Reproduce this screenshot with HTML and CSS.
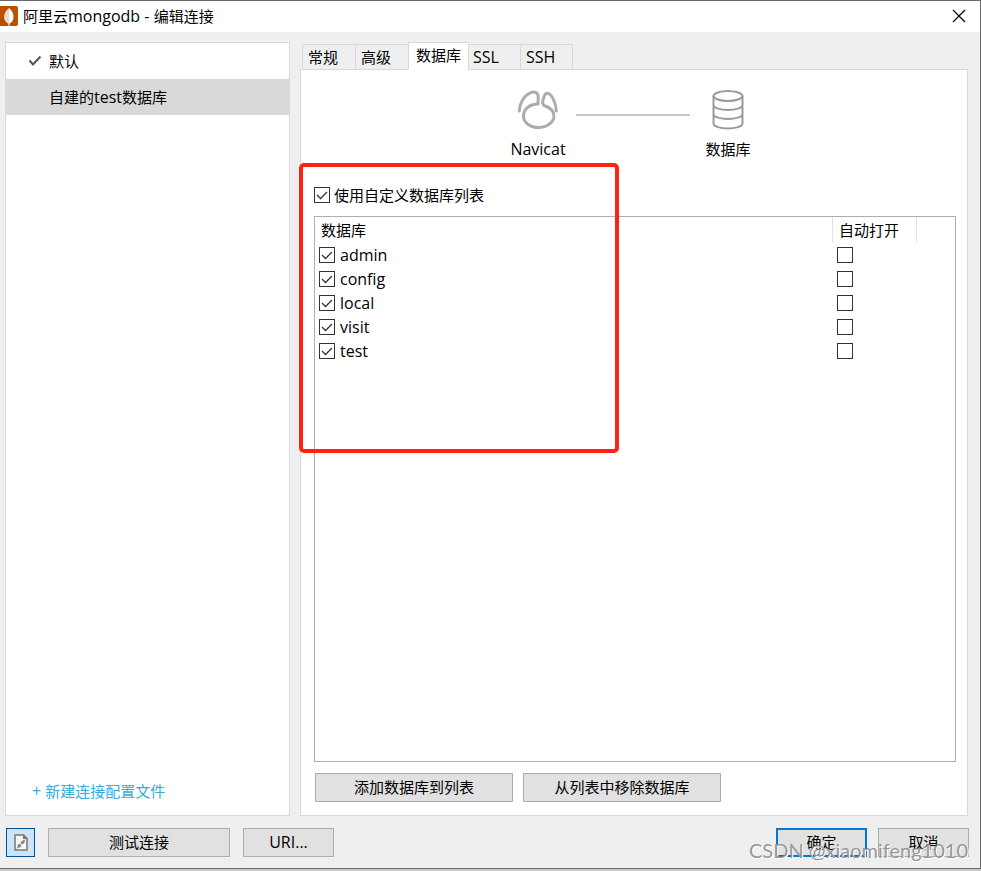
FILE: index.html
```html
<!DOCTYPE html>
<html lang="zh-CN">
<head>
<meta charset="utf-8">
<title>阿里云mongodb - 编辑连接</title>
<link rel="stylesheet" href="styles.css">
</head>
<body>
<div class="window">
  <header class="titlebar">
    <svg class="app-icon" width="18" height="20" viewBox="0 0 18 20" aria-hidden="true">
      <path d="M0 0H16Q18 0 18 2V18Q18 20 16 20H0Z" fill="#b95200"/>
      <path d="M9 2C5.500 5 4 8 4 11C4 14 6 16.500 8 17.500L8.500 20H9Z" fill="#f0d8c8"/>
      <path d="M9 2C12.500 5 13.500 8 13.500 11C13.500 14 12 16.500 9.500 17.500V20H9Z" fill="#fff"/>
    </svg>
    <h1 class="title">阿里云<span class="latin">mongodb - </span>编辑连接</h1>
    <button class="close" type="button" aria-label="关闭">
      <svg width="14" height="14" viewBox="0 0 14 14"><path d="M1 1L13 13M13 1L1 13" stroke="#000" stroke-width="1.200" fill="none"/></svg>
    </button>
  </header>

  <main class="content">
    <nav class="profiles">
      <button class="profile" type="button">
        <svg class="tick" width="14" height="12" viewBox="0 0 14 12"><path d="M1.500 5.500L5 9.500L12.500 1.500" fill="none" stroke="#555" stroke-width="2"/></svg>
        <span>默认</span>
      </button>
      <button class="profile selected" type="button"><span>自建的<span class="latin">test</span>数据库</span></button>
      <a class="new-profile" href="#"><span class="latin">+ </span>新建连接配置文件</a>
    </nav>

    <section class="editor">
      <div class="tabs" role="tablist">
        <button class="tab" type="button" role="tab">常规</button>
        <button class="tab" type="button" role="tab">高级</button>
        <button class="tab active" type="button" role="tab" aria-selected="true">数据库</button>
        <button class="tab short latin" type="button" role="tab">SSL</button>
        <button class="tab latin" type="button" role="tab">SSH</button>
      </div>
      <div class="panel">
        <div class="route">
          <div class="node">
            <svg width="42" height="42" viewBox="0 0 42 42" fill="none" stroke="#acacac" stroke-width="3" stroke-linecap="round" stroke-linejoin="round">
              <path d="M2.300 22C3 12 9 3.800 16.500 3C20 3 21.500 5.500 21.200 9L21 15C14 15 6.500 19 6.500 27C6.500 33.500 13 38.500 21.500 38.500C30 38.500 37 33 37 27C37 22 33 18.500 27 16.500L25.500 14C26 9 28 4.500 30 4.300C34 4 39 13 39.300 22"/>
            </svg>
            <span class="latin">Navicat</span>
          </div>
          <div class="wire"></div>
          <div class="node">
            <svg width="42" height="42" viewBox="0 0 42 42" fill="none" stroke="#999" stroke-width="2">
              <ellipse cx="21" cy="7" rx="14.500" ry="5"/>
              <path d="M6.500 7V34.500C6.500 41 35.500 41 35.500 34.500V7M6.500 16C6.500 22.500 35.500 22.500 35.500 16M6.500 25C6.500 31.500 35.500 31.500 35.500 25"/>
            </svg>
            <span>数据库</span>
          </div>
        </div>

        <label class="check custom-list"><input type="checkbox" checked>使用自定义数据库列表</label>

        <div class="list">
          <table>
            <thead>
              <tr><th class="name-col">数据库</th><th class="open-col">自动打开</th><th class="rest-col"></th></tr>
            </thead>
            <tbody>
              <tr><td><label class="check latin"><input type="checkbox" checked>admin</label></td><td><input type="checkbox" aria-label="自动打开 admin"></td><td></td></tr>
              <tr><td><label class="check latin"><input type="checkbox" checked>config</label></td><td><input type="checkbox" aria-label="自动打开 config"></td><td></td></tr>
              <tr><td><label class="check latin"><input type="checkbox" checked>local</label></td><td><input type="checkbox" aria-label="自动打开 local"></td><td></td></tr>
              <tr><td><label class="check latin"><input type="checkbox" checked>visit</label></td><td><input type="checkbox" aria-label="自动打开 visit"></td><td></td></tr>
              <tr><td><label class="check latin"><input type="checkbox" checked>test</label></td><td><input type="checkbox" aria-label="自动打开 test"></td><td></td></tr>
            </tbody>
          </table>
        </div>

        <div class="list-actions">
          <button class="btn wide" type="button">添加数据库到列表</button>
          <button class="btn wide" type="button">从列表中移除数据库</button>
        </div>
        <div class="highlight"></div>
      </div>
    </section>
  </main>

  <footer class="footer">
    <button class="btn toggle" type="button" aria-label="连接配置文件">
      <svg width="14" height="18" viewBox="0 0 14 18">
        <path d="M1 1H9.500L13 4.500V16H1Z" fill="#f7f7f7" stroke="#777" stroke-width="1.500"/>
        <path d="M9 1V5H13Z" fill="#777"/>
        <path d="M3 14.500L11 5.500" stroke="#999" stroke-width="1"/>
        <path d="M3.500 11L5 9.500L7.500 12L6 13.500L3.500 14Z" fill="#888"/>
        <path d="M6.500 8.500L8.500 6.500L11 6L10.500 8.500L8.500 10.500Z" fill="#888"/>
      </svg>
    </button>
    <button class="btn test" type="button">测试连接</button>
    <button class="btn latin" type="button">URI...</button>
    <span class="spacer"></span>
    <button class="btn primary" type="button">确定</button>
    <button class="btn" type="button">取消</button>
    <span class="watermark">CSDN @xiaomifeng1010</span>
  </footer>
</div>
</body>
</html>
```

FILE: styles.css
```css
* { box-sizing: border-box; }

body {
  margin: 0;
  background: #c9c9c9;
  color: #000;
  font: 15px/20px "Open Sans", "Noto Sans CJK SC", sans-serif;
}

button {
  font: inherit;
  color: inherit;
}

.latin { font-size: 16px; }

.window {
  display: flex;
  flex-direction: column;
  min-height: calc(100vh - 2px);
  margin-bottom: 2px;
  background: #efefef;
  border: solid #6b696b;
  border-width: 1px 1px 1px 0;
}

.titlebar {
  display: flex;
  align-items: center;
  gap: 5px;
  height: 31px;
  padding: 0 14px 2px 0;
  background: #fff;
}

.title {
  flex: 1;
  margin: 0;
  font-size: 15px;
  font-weight: 400;
  white-space: pre;
}

.close {
  display: flex;
  padding: 0;
  border: 0;
  background: none;
}

.content {
  flex: 1;
  display: flex;
  gap: 10px;
  padding: 10px 12px 0 5px;
}

.profiles {
  display: flex;
  flex-direction: column;
  flex: 0 0 285px;
  background: #fff;
  border: 1px solid #d9d9d9;
}

.profile {
  position: relative;
  height: 36px;
  padding: 0 0 0 43px;
  border: 0;
  background: none;
  text-align: left;
}

.profile.selected { background: #d9d9d9; }

.tick {
  position: absolute;
  left: 22px;
  top: 12px;
}

.new-profile {
  margin: auto 0 14px 26px;
  color: #35abdc;
  text-decoration: none;
}

.editor {
  flex: 1;
  display: flex;
  flex-direction: column;
}

.tabs {
  display: flex;
  align-items: flex-end;
  height: 28px;
  padding-left: 2px;
  margin-bottom: -1px;
  z-index: 1;
}

.tab {
  width: 53px;
  height: 26px;
  padding: 0 0 0 5px;
  border: 1px solid #d9d9d9;
  border-right: 0;
  background: #efefef;
  text-align: left;
}

.tab.short {
  width: 52px;
  padding-left: 4px;
}

.tab:last-child { border-right: 1px solid #d9d9d9; }

.tab.active {
  width: 60px;
  height: 28px;
  padding: 0 0 2px 7px;
  background: #fff;
  border-bottom-color: #fff;
}

.panel {
  position: relative;
  flex: 1;
  display: flex;
  flex-direction: column;
  padding: 19px 11px 13px 13px;
  background: #fff;
  border: 1px solid #d9d9d9;
}

.route {
  display: grid;
  grid-template-columns: 76px 114px 76px;
  justify-content: center;
  padding-right: 4px;
}

.node {
  display: flex;
  flex-direction: column;
  align-items: center;
  gap: 8px;
}

.wire {
  height: 2px;
  margin-top: 25px;
  background: #c8c8c8;
}

.check {
  display: flex;
  align-items: center;
  gap: 5px;
}

input[type="checkbox"] {
  appearance: none;
  display: block;
  width: 16px;
  height: 16px;
  margin: 0;
  border: 1px solid #333;
  background: #fff;
}

input[type="checkbox"]:checked {
  background: url("data:image/svg+xml,%3Csvg xmlns='http://www.w3.org/2000/svg' viewBox='0 0 14 14'%3E%3Cpath d='M2 7L5.500 10.500L12 4' fill='none' stroke='%23333' stroke-width='1.300'/%3E%3C/svg%3E");
}

.custom-list {
  gap: 4px;
  align-self: flex-start;
  margin: 26px 0 11px;
}

.list {
  flex: 1;
  border: 1px solid #adadad;
}

table {
  width: 100%;
  border-collapse: separate;
  border-spacing: 0;
  table-layout: fixed;
}

th {
  height: 26px;
  padding: 0 6px;
  border-right: 1px solid #e3e3e3;
  font-weight: 400;
  text-align: left;
}

.open-col { width: 84px; }
.rest-col { width: 38px; border-right: 0; }

td {
  height: 24px;
  padding: 0 4px;
}

.list-actions {
  display: flex;
  gap: 10px;
  padding: 11px 1px 0;
}

.btn {
  width: 91px;
  height: 29px;
  padding: 0 0 2px;
  border: 1px solid #adadad;
  background: #e1e1e1;
}

.btn.wide { width: 198px; }
.btn.test { width: 182px; }
.btn.primary { border: 2px solid #0078d7; }

.btn.toggle {
  display: flex;
  align-items: center;
  justify-content: center;
  width: 29px;
  padding: 0;
  background: #cce4f7;
  border-color: #005499;
}

.highlight {
  position: absolute;
  left: -2px;
  top: 93px;
  width: 320px;
  height: 290px;
  border: 4px solid #ff2213;
  border-radius: 5px;
  pointer-events: none;
}

.footer {
  position: relative;
  display: flex;
  gap: 13px;
  padding: 12px 11px 11px 6px;
}

.spacer { flex: 1; }
.primary { margin-right: -2px; }

.watermark {
  position: absolute;
  right: 12px;
  bottom: 6px;
  color: rgba(140, 140, 140, 0.9);
  font: 20px/24px Lato, sans-serif;
  text-shadow: 1px 1px 0 #fff;
  pointer-events: none;
}
```
